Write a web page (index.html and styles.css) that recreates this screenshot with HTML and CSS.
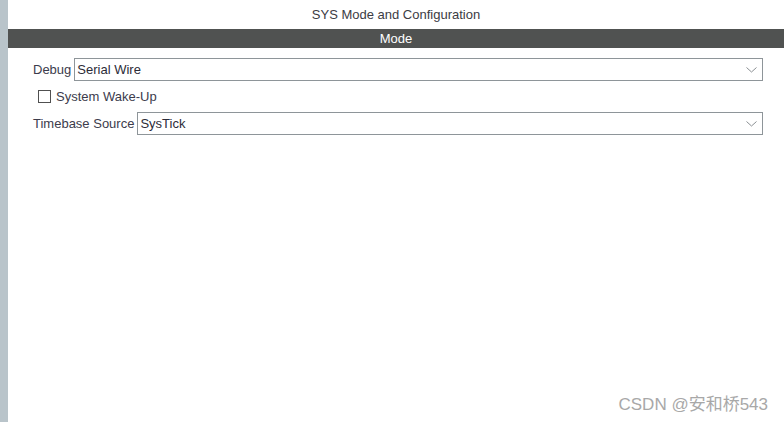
FILE: index.html
```html
<!DOCTYPE html>
<html>
<head>
<meta charset="utf-8">
<link rel="stylesheet" href="styles.css">
</head>
<body>
<div class="app">
  <div class="side"></div>
  <div class="main">
    <div class="title">SYS Mode and Configuration</div>
    <div class="bar">Mode</div>
    <div class="form">
      <div class="row">
        <span class="label">Debug</span>
        <div class="combo"><span>Serial Wire</span>
          <svg class="chev" width="11" height="6" viewBox="0 0 11 6"><path d="M0.5 0.5 L5.5 5 L10.5 0.5" fill="none" stroke="#8a8f93" stroke-width="1"/></svg>
        </div>
      </div>
      <div class="check-row">
        <span class="box"></span>
        <span class="label">System Wake-Up</span>
      </div>
      <div class="row">
        <span class="label">Timebase Source</span>
        <div class="combo"><span>SysTick</span>
          <svg class="chev" width="11" height="6" viewBox="0 0 11 6"><path d="M0.5 0.5 L5.5 5 L10.5 0.5" fill="none" stroke="#8a8f93" stroke-width="1"/></svg>
        </div>
      </div>
    </div>
    <div class="watermark">CSDN @安和桥543</div>
  </div>
</div>
</body>
</html>
```
FILE: styles.css
```css
html, body {
  margin: 0;
  padding: 0;
  background: #ffffff;
}
.app {
  display: flex;
  width: 784px;
  height: 422px;
  overflow: hidden;
  font-family: "Liberation Sans", Arial, sans-serif;
  font-size: 13px;
  color: #3c3c4c;
}
.side {
  width: 8px;
  flex: none;
  background: #b9c4ca;
}
.main {
  flex: 1;
  display: flex;
  flex-direction: column;
  position: relative;
}
.title {
  height: 29px;
  line-height: 29px;
  text-align: center;
  color: #3c3c44;
}
.bar {
  height: 19px;
  line-height: 19px;
  background: #505251;
  color: #ffffff;
  text-align: center;
}
.form {
  display: flex;
  flex-direction: column;
  padding: 10px 21px 0 25px;
}
.row {
  display: flex;
  align-items: center;
  gap: 3px;
  height: 23px;
}
.combo {
  flex: 1;
  height: 23px;
  box-sizing: border-box;
  border: 1px solid #8e9599;
  display: flex;
  align-items: center;
  justify-content: space-between;
  padding: 0 5px 0 2px;
  color: #2c2c38;
}
.chev {
  display: block;
}
.check-row {
  display: flex;
  align-items: center;
  gap: 5px;
  height: 31px;
  padding-left: 5px;
}
.box {
  width: 11px;
  height: 11px;
  border: 1px solid #505050;
  box-sizing: content-box;
}
.watermark {
  position: absolute;
  right: 16px;
  bottom: 7px;
  font-family: "Liberation Sans", "Noto Sans CJK SC", sans-serif;
  font-size: 17px;
  color: #a8a8a8;
}
```
